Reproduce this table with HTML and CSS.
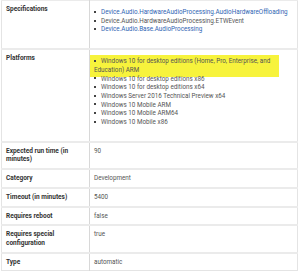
FILE: index.html
```html
<!DOCTYPE html>
<html lang="en">
<head>
	<meta charset="UTF-8">
	<meta name="viewport" content="width=device-width, initial-scale=1.0">
	<title>Test details</title>
	<link rel="stylesheet" href="styles.css">
</head>
<body>
	<table class="details">
		<tr>
			<th>Specifications</th>
			<td>
				<ul class="items">
					<li><a href="#">Device.Audio.HardwareAudioProcessing.AudioHardwareOffloading</a></li>
					<li>Device.Audio.HardwareAudioProcessing.ETWEvent</li>
					<li><a href="#">Device.Audio.Base.AudioProcessing</a></li>
				</ul>
			</td>
		</tr>
		<tr>
			<th>Platforms</th>
			<td>
				<ul class="items">
					<li class="marked">Windows 10 for desktop editions (Home, Pro, Enterprise, and<br>Education) ARM</li>
					<li>Windows 10 for desktop editions x86</li>
					<li>Windows 10 for desktop editions x64</li>
					<li>Windows Server 2016 Technical Preview x64</li>
					<li>Windows 10 Mobile ARM</li>
					<li>Windows 10 Mobile ARM64</li>
					<li>Windows 10 Mobile x86</li>
				</ul>
			</td>
		</tr>
		<tr>
			<th>Expected run time (in minutes)</th>
			<td>90</td>
		</tr>
		<tr>
			<th>Category</th>
			<td>Development</td>
		</tr>
		<tr>
			<th>Timeout (in minutes)</th>
			<td>5400</td>
		</tr>
		<tr>
			<th>Requires reboot</th>
			<td>false</td>
		</tr>
		<tr>
			<th>Requires special configuration</th>
			<td>true</td>
		</tr>
		<tr>
			<th>Type</th>
			<td>automatic</td>
		</tr>
	</table>
</body>
</html>
```
FILE: styles.css
```css
* {
	box-sizing: border-box;
	padding: 0;
	margin: 0;
}

body {
	font-family: Roboto, 'Liberation Sans', sans-serif;
	font-size: 6.3px;
	line-height: 8.7px;
	background: #fff;
	color: #555;
	padding: 0 2px 0 1px;
}

.details {
	width: 297px;
	table-layout: fixed;
	border-collapse: collapse;
	border: 1px solid #e4e4e4;
}

.details tr {
	border-top: 2px solid #ebebeb;
}

.details tr:first-child {
	border-top-width: 1px;
}

.details th,
.details td {
	text-align: left;
	vertical-align: top;
	padding: 4px 2px 4px 4px;
}

.details th {
	width: 88px;
	color: #333;
	font-size: 6.5px;
	font-weight: 700;
	border-right: 1px solid #d8d8d8;
}

.items {
	list-style: none;
	margin: 3px 0 10px;
}

.items li {
	white-space: nowrap;
}

.items li::before {
	content: '';
	display: inline-block;
	width: 2px;
	height: 2px;
	background: #444;
	margin: 0 5px 1px 0;
	vertical-align: middle;
}

.items a {
	color: #2f65b3;
	text-decoration: none;
}

.marked {
	background: #f7f33c;
	margin: -2px 0 -2px -4px;
	padding: 2px 0 2px 4px;
	width: 189px;
}
```
